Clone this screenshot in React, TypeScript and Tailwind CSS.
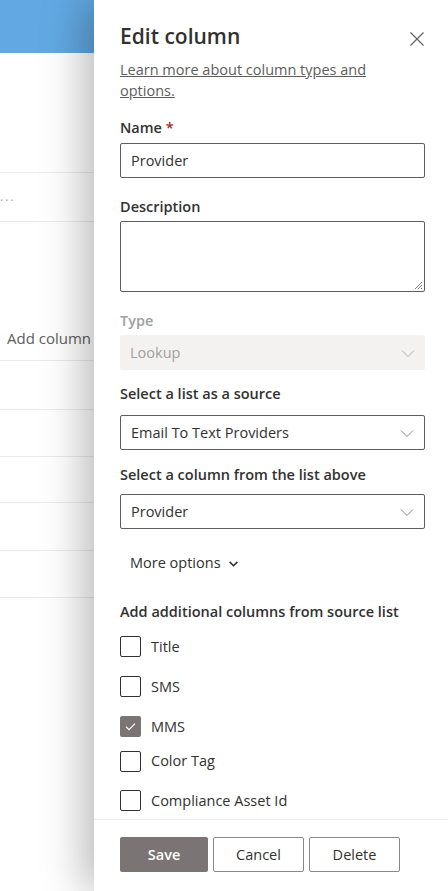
import React from "react";

const font = { fontFamily: '"Open Sans", "Noto Sans", sans-serif' };

function Chevron({ color = "#8a8886" }: { color?: string }) {
  return (
    <svg width="16" height="16" viewBox="0 0 16 16" fill="none">
      <path d="M2 5.5 L8 11.5 L14 5.5" stroke={color} strokeWidth="1" />
    </svg>
  );
}

function Dropdown({ value, disabled }: { value: string; disabled?: boolean }) {
  return (
    <div
      className={
        "h-[35px] w-[305px] rounded-[2px] flex items-center justify-between pl-[10px] pr-[9px] text-[14.5px] " +
        (disabled
          ? "bg-[#f3f2f1] text-[#a19f9d]"
          : "border border-[#605e5c] bg-white text-[#323130]")
      }
    >
      <span>{value}</span>
      <Chevron color={disabled ? "#b3b0ad" : "#8a8886"} />
    </div>
  );
}

function Check({ label, checked, className }: { label: string; checked?: boolean; className?: string }) {
  return (
    <div className={"flex items-center gap-[10px] " + (className || "")}>
      <div
        className={
          "w-[21px] h-[21px] rounded-[2px] flex items-center justify-center " +
          (checked ? "bg-[#7a7574]" : "border border-[#323130] bg-white")
        }
      >
        {checked && (
          <svg width="13" height="13" viewBox="0 0 13 13" fill="none">
            <path d="M2 6.8 L5 9.6 L11 3.6" stroke="#fff" strokeWidth="1.2" />
          </svg>
        )}
      </div>
      <span className="text-[14.5px] text-[#323130]">{label}</span>
    </div>
  );
}

export default function App() {
  return (
    <div className="w-[448px] h-[891px] flex overflow-hidden bg-white" style={font}>
      {/* background page */}
      <div className="w-[94px] shrink-0 flex flex-col bg-white">
        <div className="h-[53px] bg-[#62a9e3]" />
        <div className="h-[120px] border-b border-[#edebe9]" />
        <div className="h-[49px] border-b border-[#edebe9] flex items-center pl-0 text-[#a19f9d] text-[12px] tracking-[2px]">
          ...
        </div>
        <div className="h-[139px] border-b border-[#edebe9] flex items-end pb-[11px] pl-[7px] text-[15px] text-[#605e5c] whitespace-nowrap">
          Add column
        </div>
        <div className="h-[49px] border-b border-[#edebe9]" />
        <div className="h-[47px] border-b border-[#edebe9]" />
        <div className="h-[46px] border-b border-[#edebe9]" />
        <div className="h-[48px] border-b border-[#edebe9]" />
        <div className="h-[47px] border-b border-[#edebe9]" />
      </div>

      {/* panel */}
      <div className="relative flex-1 bg-white flex flex-col shadow-[-10px_0_40px_rgba(0,0,0,0.28)] text-[#323130]">
        <div className="flex-1 pl-[26px] pr-[23px]">
          <div className="flex items-start justify-between pt-[22px]">
            <h1 className="text-[21px] leading-[28px] font-semibold text-[#323130]">Edit column</h1>
            <svg width="16" height="16" viewBox="0 0 16 16" fill="none" className="mt-[9px] mr-[0px]">
              <path d="M1.5 1.5 L14.5 14.5 M14.5 1.5 L1.5 14.5" stroke="#605e5c" strokeWidth="1.1" />
            </svg>
          </div>
          <a className="block mt-[9px] text-[14.5px] leading-[21px] text-[#605e5c] underline w-[260px]">
            Learn more about column types and options.
          </a>

          <div className="mt-[17px] text-[14.5px] leading-[20px] font-semibold">
            Name <span className="text-[#a4262c]">*</span>
          </div>
          <div className="mt-[5px] h-[35px] w-[305px] border border-[#605e5c] rounded-[2px] flex items-center pl-[10px] text-[14.5px]">
            Provider
          </div>

          <div className="mt-[19px] text-[14.5px] leading-[20px] font-semibold">Description</div>
          <div className="relative mt-[4px] h-[71px] w-[305px] border border-[#605e5c] rounded-[2px]">
            <svg width="10" height="10" viewBox="0 0 10 10" className="absolute right-[1px] bottom-[1px]">
              <path d="M9 2 L2 9 M9 5 L5 9 M9 8 L8 9" stroke="#605e5c" strokeWidth="0.8" />
            </svg>
          </div>

          <div className="mt-[19px] text-[14.5px] leading-[20px] font-semibold text-[#a19f9d]">Type</div>
          <div className="mt-[4px]">
            <Dropdown value="Lookup" disabled />
          </div>

          <div className="mt-[14px] text-[14.5px] leading-[20px] font-semibold">Select a list as a source</div>
          <div className="mt-[11px]">
            <Dropdown value="Email To Text Providers" />
          </div>

          <div className="mt-[15px] text-[14.5px] leading-[20px] font-semibold">Select a column from the list above</div>
          <div className="mt-[9px]">
            <Dropdown value="Provider" />
          </div>

          <div className="mt-[24px] pl-[10px] flex items-center gap-[7px] text-[14.5px] leading-[20px] text-[#323130]">
            More options
            <svg width="11" height="11" viewBox="0 0 10 10" fill="none">
              <path d="M1.5 3.5 L5 7 L8.5 3.5" stroke="#323130" strokeWidth="1.4" />
            </svg>
          </div>

          <div className="mt-[29px] text-[14.5px] leading-[20px] font-semibold">
            Add additional columns from source list
          </div>
          <Check className="mt-[14px]" label="Title" />
          <Check className="mt-[18px]" label="SMS" />
          <Check className="mt-[18px]" label="MMS" checked />
          <Check className="mt-[13px]" label="Color Tag" />
          <Check className="mt-[18px]" label="Compliance Asset Id" />
        </div>

        <div className="border-t border-[#edebe9] h-[72px] pl-[26px] pt-[17px] flex gap-[5px]">
          <button className="w-[88px] h-[35px] rounded-[2px] bg-[#7a7574] text-white text-[14.5px] font-semibold">
            Save
          </button>
          <button className="w-[91px] h-[35px] rounded-[2px] border border-[#8a8886] bg-white text-[#323130] text-[14.5px]">
            Cancel
          </button>
          <button className="w-[91px] h-[35px] rounded-[2px] border border-[#8a8886] bg-white text-[#323130] text-[14.5px]">
            Delete
          </button>
        </div>
      </div>
    </div>
  );
}
